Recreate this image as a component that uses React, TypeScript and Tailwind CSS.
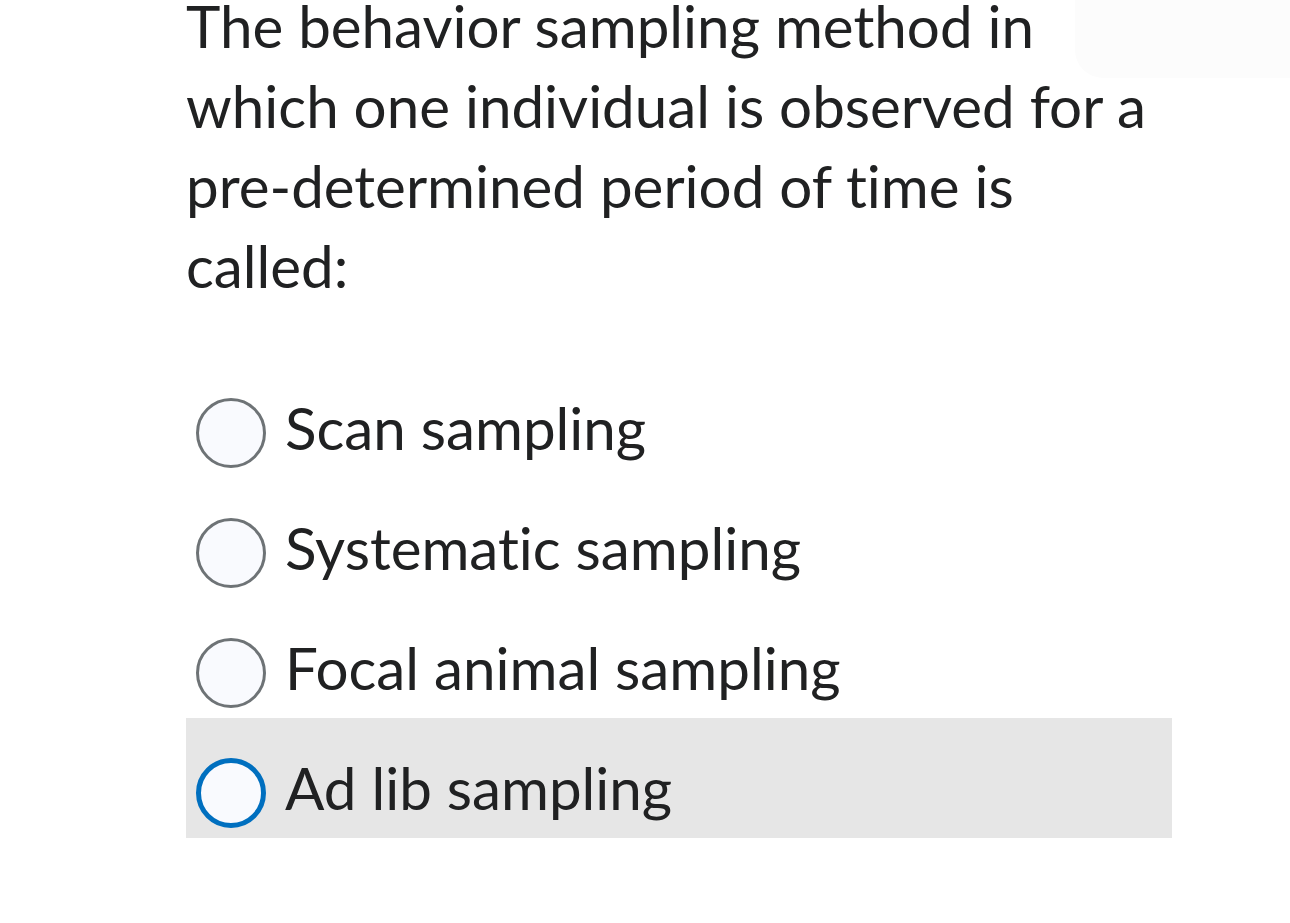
const OPTIONS = [
  { label: 'Scan sampling', focused: false },
  { label: 'Systematic sampling', focused: false },
  { label: 'Focal animal sampling', focused: false },
  { label: 'Ad lib sampling', focused: true },
];

export default function App() {
  return (
    <div
      className="relative min-h-[923px] w-[1290px] overflow-hidden bg-white text-[#202122] [font-variant-ligatures:none]"
      style={{ fontFamily: 'Lato, "Open Sans", sans-serif' }}
    >
      {/* faint overlay in the top right corner */}
      <div className="absolute right-0 top-0 h-[78px] w-[215px] rounded-bl-[28px] bg-[#fcfcfc]" />

      <div className="ml-[186px] w-[986px]">
        <p className="-mt-[15px] text-[58.3px] leading-[80px]">
          The behavior sampling method in which one individual is observed for a pre-determined period of time is
          called:
        </p>

        <div className="mt-[53px] flex flex-col">
          {OPTIONS.map((option) => (
            <label
              key={option.label}
              className={`flex h-[120px] items-start ${option.focused ? 'bg-[#e6e6e6]' : ''}`}
            >
              <span
                className={`ml-[10px] mt-[40px] h-[70px] w-[70px] shrink-0 rounded-full bg-[#f9fafe] ${
                  option.focused ? 'border-[5px] border-[#006fbf]' : 'border-[3px] border-[#6e7376]'
                }`}
              />
              <span className="ml-[19px] mt-[29px] text-[58.3px] leading-[80px]">{option.label}</span>
            </label>
          ))}
        </div>
      </div>
    </div>
  );
}
